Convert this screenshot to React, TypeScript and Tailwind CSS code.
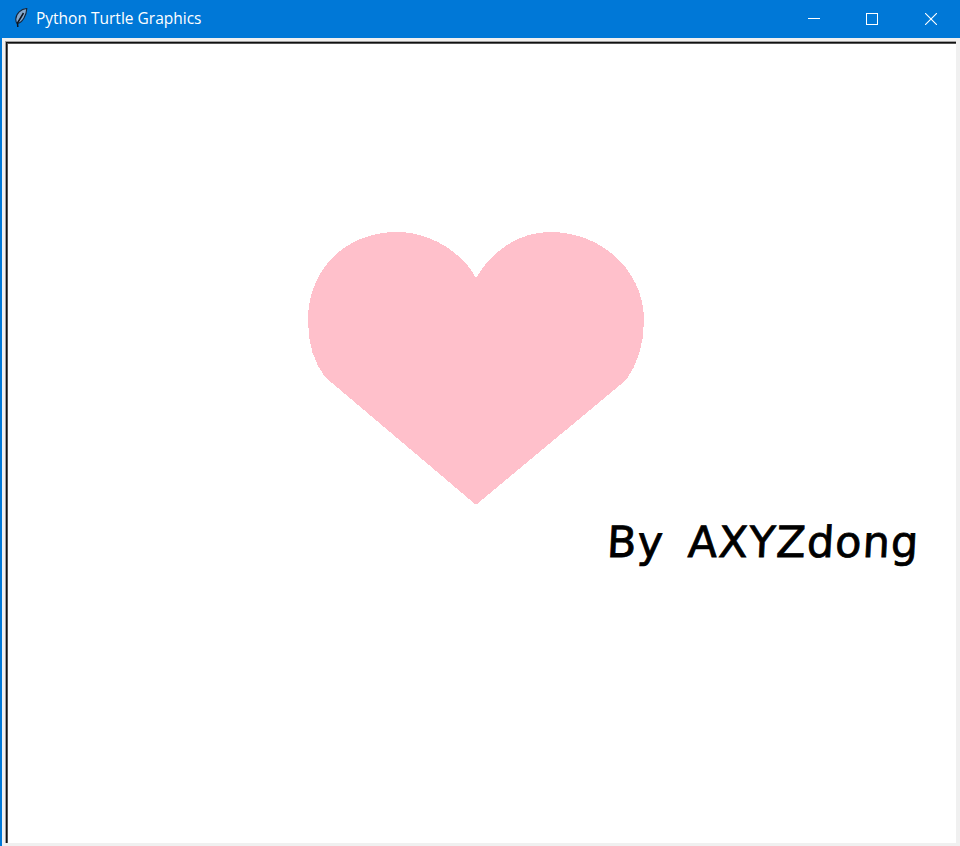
const heartPath =
  "M476 278 C462 252 430 232 397 232 C345 232 308 270 308 320 C308 345 314 362 325 377 L475 504 L477 504 L626 380 C637 365 644 345 644 320 C644 272 603 232 550 232 C518 232 491 252 476 278 Z";

const Feather = () => (
  <svg width="14" height="22" viewBox="0 0 14 22" className="shrink-0">
    <path d="M12.800 0.500 C7 1 2 5.500 1.800 11 C1.700 12.800 2.200 14.500 3.200 15.500 C8.500 15 12.500 7 12.800 0.500 Z" fill="#86a8cc" stroke="#14263c" strokeWidth="1.100" />
    <path d="M9.500 5 L3.500 15 L3.800 19" fill="none" stroke="#0a1420" strokeWidth="1.500" />
  </svg>
);

const App = () => {
  return (
    <div className="w-[960px] h-[846px] flex flex-col overflow-hidden bg-[#f0f0f0] font-['Open_Sans','Noto_Sans',sans-serif]">
      {/* Title bar */}
      <div className="h-[38px] shrink-0 flex items-center bg-[#0078d7] text-white">
        <div className="ml-[14px] w-[14px] flex justify-center">
          <Feather />
        </div>
        <span className="ml-[8px] text-[15.5px] leading-none">Python Turtle Graphics</span>
        <div className="ml-auto flex">
          <div className="w-[58px] h-[38px] flex items-center justify-center">
            <div className="w-[12px] h-[1px] mb-[1px] bg-white" />
          </div>
          <div className="w-[58px] h-[38px] flex items-center justify-center">
            <div className="w-[12px] h-[12px] border border-white" />
          </div>
          <div className="ml-[1px] w-[58px] h-[38px] flex items-center justify-center">
            <svg width="12" height="12" viewBox="0 0 12 12" fill="none" stroke="white" strokeWidth="1.100">
              <path d="M0 0 L12 12 M12 0 L0 12" />
            </svg>
          </div>
        </div>
      </div>

      {/* Window body */}
      <div className="flex-1 border-l-2 border-[#0078d7] pl-[3px] pt-[3px] pr-[4px] pb-[3px]">
        <div className="relative w-full h-full bg-white shadow-[inset_1px_1px_0_#a0a0a0,inset_2px_2px_0_#111111,inset_3px_3px_0_#555555]">
          {/* Turtle canvas, offsets are relative to this corner */}
          <svg width="960" height="846" viewBox="0 0 960 846" className="absolute left-[-5px] top-[-41px] pointer-events-none">
            <path d={heartPath} fill="#ffc0cb" shapeRendering="crispEdges" />
          </svg>
          <span className="absolute left-[602px] top-[480px] whitespace-nowrap text-[43px] leading-none text-black font-['DejaVu_Sans',sans-serif] tracking-[1.1px] [word-spacing:9px] [-webkit-text-stroke:0.8px_black] -skew-x-3">
            By AXYZdong
          </span>
        </div>
      </div>
    </div>
  );
};

export default App;
